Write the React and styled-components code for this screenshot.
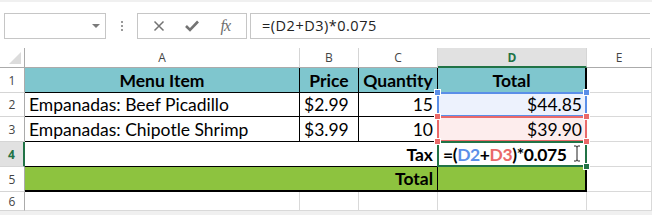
import React from "react";
import styled, { createGlobalStyle } from "styled-components";

const Global = createGlobalStyle`
  html, body { margin: 0; padding: 0; background: #ffffff; }
  body { font-family: "Lato", "Liberation Sans", sans-serif; }
  * { box-sizing: border-box; }
`;

const Page = styled.div`
  width: 652px;
  height: 215px;
  overflow: hidden;
  display: flex;
  flex-direction: column;
  background: #fff;
`;

const TopStrip = styled.div`
  height: 2px;
  background: #f0f0f0;
`;

const FormulaBar = styled.div`
  display: flex;
  align-items: center;
  height: 46px;
  padding: 10px 2px 9px 4px;
`;

const NameBox = styled.div`
  width: 102px;
  height: 26px;
  border: 1px solid #c6c6c6;
  display: flex;
  align-items: center;
  justify-content: flex-end;
  padding-right: 5px;
`;

const Caret = styled.div`
  width: 0;
  height: 0;
  border-left: 4px solid transparent;
  border-right: 4px solid transparent;
  border-top: 4px solid #7a7a7a;
`;

const Grip = styled.div`
  width: 31px;
  display: flex;
  flex-direction: column;
  align-items: center;
  gap: 2px;
  & > span { width: 2px; height: 2px; background: #9a9a9a; }
`;

const ButtonBox = styled.div`
  width: 110px;
  height: 26px;
  border: 1px solid #c6c6c6;
  display: flex;
  align-items: center;
  justify-content: space-around;
  padding: 0 4px;
  margin-right: 3px;
`;

const IconBtn = styled.div`
  width: 22px;
  height: 22px;
  display: flex;
  align-items: center;
  justify-content: center;
  color: #737373;
`;

const Fx = styled.span`
  font-family: "Liberation Serif", serif;
  font-style: italic;
  font-size: 16px;
  color: #6e6e6e;
  letter-spacing: -1px;
`;

const FormulaInput = styled.div`
  flex: 1;
  height: 26px;
  border-top: 1px solid #c6c6c6;
  border-bottom: 1px solid #c6c6c6;
  border-left: 1px solid #c6c6c6;
  display: flex;
  align-items: center;
  padding-left: 11px;
  font-family: "Open Sans", "Noto Sans", sans-serif;
  font-size: 14.5px;
  letter-spacing: 0.5px;
  color: #222;
`;

const Sheet = styled.div`
  display: grid;
  grid-template-columns: 25px 275px 59px 79px 149px 1fr;
  grid-template-rows: 20px 25px 24px 25px 25px 25px 19px;
`;

const Corner = styled.div`
  border-right: 1px solid #ababab;
  border-bottom: 1px solid #ababab;
  position: relative;
  &::after {
    content: "";
    position: absolute;
    right: 3px;
    bottom: 3px;
    width: 0;
    height: 0;
    border-left: 12px solid transparent;
    border-bottom: 12px solid #dcdcdc;
  }
`;

const ColHead = styled.div`
  display: flex;
  align-items: center;
  justify-content: center;
  font-family: "Open Sans", "Noto Sans", sans-serif;
  font-size: 12px;
  color: ${(p) => (p.$active ? "#217346" : "#444")};
  font-weight: ${(p) => (p.$active ? 700 : 400)};
  background: ${(p) => (p.$active ? "#e1e1e1" : "#fff")};
  border-right: 1px solid #d5d5d5;
  border-bottom: ${(p) => (p.$active ? "2px solid #217346" : "1px solid #ababab")};
`;

const RowHead = styled.div`
  display: flex;
  align-items: center;
  justify-content: center;
  font-family: "Open Sans", "Noto Sans", sans-serif;
  font-size: 12px;
  color: ${(p) => (p.$active ? "#217346" : "#444")};
  font-weight: ${(p) => (p.$active ? 700 : 400)};
  background: ${(p) => (p.$active ? "#e1e1e1" : "#fff")};
  border-right: ${(p) => (p.$active ? "2px solid #217346" : "1px solid #ababab")};
  border-bottom: 1px solid #d5d5d5;
`;

const Cell = styled.div`
  position: relative;
  display: flex;
  align-items: center;
  justify-content: ${(p) =>
    p.$align === "right" ? "flex-end" : p.$align === "center" ? "center" : "flex-start"};
  padding: 0 4px 0 ${(p) => p.$pl || "4px"};
  grid-column: ${(p) => p.$span || "auto"};
  font-family: "Lato", "Liberation Sans", sans-serif;
  font-size: 17.5px;
  letter-spacing: ${(p) => p.$ls || "normal"};
  font-weight: ${(p) => (p.$bold ? 700 : 400)};
  color: #000;
  white-space: nowrap;
  background: ${(p) => p.$bg || "#fff"};
  border-right: ${(p) => p.$br || "1px solid #000"};
  border-bottom: ${(p) => p.$bb || "1px solid #000"};
`;

const GridCell = styled.div`
  border-right: 1px solid #d9d9d9;
  border-bottom: 1px solid #d9d9d9;
`;

const Range = styled.div`
  position: absolute;
  top: -1px;
  left: -1px;
  right: -1px;
  bottom: -1px;
  border: 2px solid ${(p) => p.$color};
  pointer-events: none;
  z-index: 2;
`;

const Handle = styled.span`
  position: absolute;
  width: 5px;
  height: 5px;
  background: ${(p) => p.$color};
  border: 1px solid #fff;
  box-sizing: content-box;
  ${(p) => (p.$top ? "top: -4px;" : "bottom: -4px;")}
  ${(p) => (p.$left ? "left: -4px;" : "right: -4px;")}
  z-index: 3;
`;

const Ref = styled.span`
  color: ${(p) => p.$color};
`;

const Cursor = styled.svg`
  position: absolute;
  right: 5px;
  top: 3px;
  z-index: 4;
`;

const Bottom = styled.div`
  flex: 1;
  background: #f0f0f0;
`;

const BLUE = "#5b8fe8";
const RED = "#ea6a6a";
const GREEN = "#217346";

function Handles({ color }) {
  return (
    <>
      <Handle $color={color} $top $left />
      <Handle $color={color} $top />
      <Handle $color={color} $left />
      <Handle $color={color} />
    </>
  );
}

export default function App() {
  const TEAL = "#7fc6ce";
  const LIME = "#8dc33f";
  return (
    <Page>
      <Global />
      <TopStrip />
      <FormulaBar>
        <NameBox>
          <Caret />
        </NameBox>
        <Grip>
          <span />
          <span />
          <span />
        </Grip>
        <ButtonBox>
          <IconBtn>
            <svg width="12" height="12" viewBox="0 0 12 12">
              <path d="M1.5 1.5 L10.5 10.5 M10.5 1.5 L1.5 10.5" stroke="#737373" strokeWidth="1.5" fill="none" />
            </svg>
          </IconBtn>
          <IconBtn>
            <svg width="14" height="12" viewBox="0 0 14 12">
              <path d="M1 6 L5 10 L13 1.5" stroke="#737373" strokeWidth="2.6" fill="none" />
            </svg>
          </IconBtn>
          <IconBtn>
            <Fx>fx</Fx>
          </IconBtn>
        </ButtonBox>
        <FormulaInput>=(D2+D3)*0.075</FormulaInput>
      </FormulaBar>
      <Sheet>
        <Corner />
        <ColHead>A</ColHead>
        <ColHead>B</ColHead>
        <ColHead>C</ColHead>
        <ColHead $active>D</ColHead>
        <ColHead>E</ColHead>

        <RowHead>1</RowHead>
        <Cell $bg={TEAL} $bold $align="center">Menu Item</Cell>
        <Cell $bg={TEAL} $bold $align="center">Price</Cell>
        <Cell $bg={TEAL} $bold $align="center">Quantity</Cell>
        <Cell $bg={TEAL} $bold $align="center" $br="2px solid #000">Total</Cell>
        <GridCell />

        <RowHead>2</RowHead>
        <Cell>Empanadas: Beef Picadillo</Cell>
        <Cell>$2.99</Cell>
        <Cell $align="right">15</Cell>
        <Cell $align="right" $bg="#edf2fd" $br="1px solid #d9d9d9">
          $44.85
          <Range $color={BLUE} />
          <Handles color={BLUE} />
        </Cell>
        <GridCell />

        <RowHead>3</RowHead>
        <Cell>Empanadas: Chipotle Shrimp</Cell>
        <Cell>$3.99</Cell>
        <Cell $align="right">10</Cell>
        <Cell $align="right" $bg="#fdeded" $br="1px solid #d9d9d9">
          $39.90
          <Range $color={RED} />
          <Handles color={RED} />
        </Cell>
        <GridCell />

        <RowHead $active>4</RowHead>
        <Cell $span="span 3" $bold $align="right">Tax</Cell>
        <Cell $bold $br="1px solid #d9d9d9" $pl="5px" $ls="-0.4px">
          =(<Ref $color={BLUE}>D2</Ref>+<Ref $color={RED}>D3</Ref>)*0.075
          <Range $color={GREEN} />
          <Handle $color={GREEN} />
          <Cursor width="8" height="17" viewBox="0 0 8 17">
            <path d="M1 1 H3 Q4 1 4 2.5 V14.5 Q4 16 3 16 H1 M7 1 H5 Q4 1 4 2.5 M4 14.5 Q4 16 5 16 H7" stroke="#222" strokeWidth="1" fill="none" />
          </Cursor>
        </Cell>
        <GridCell />

        <RowHead>5</RowHead>
        <Cell $span="span 3" $bold $align="right" $bg={LIME} $bb="2px solid #000">Total</Cell>
        <Cell $bg={LIME} $br="2px solid #000" $bb="2px solid #000" />
        <GridCell />

        <RowHead>6</RowHead>
        <GridCell />
        <GridCell />
        <GridCell />
        <GridCell />
        <GridCell />
      </Sheet>
      <Bottom />
    </Page>
  );
}
